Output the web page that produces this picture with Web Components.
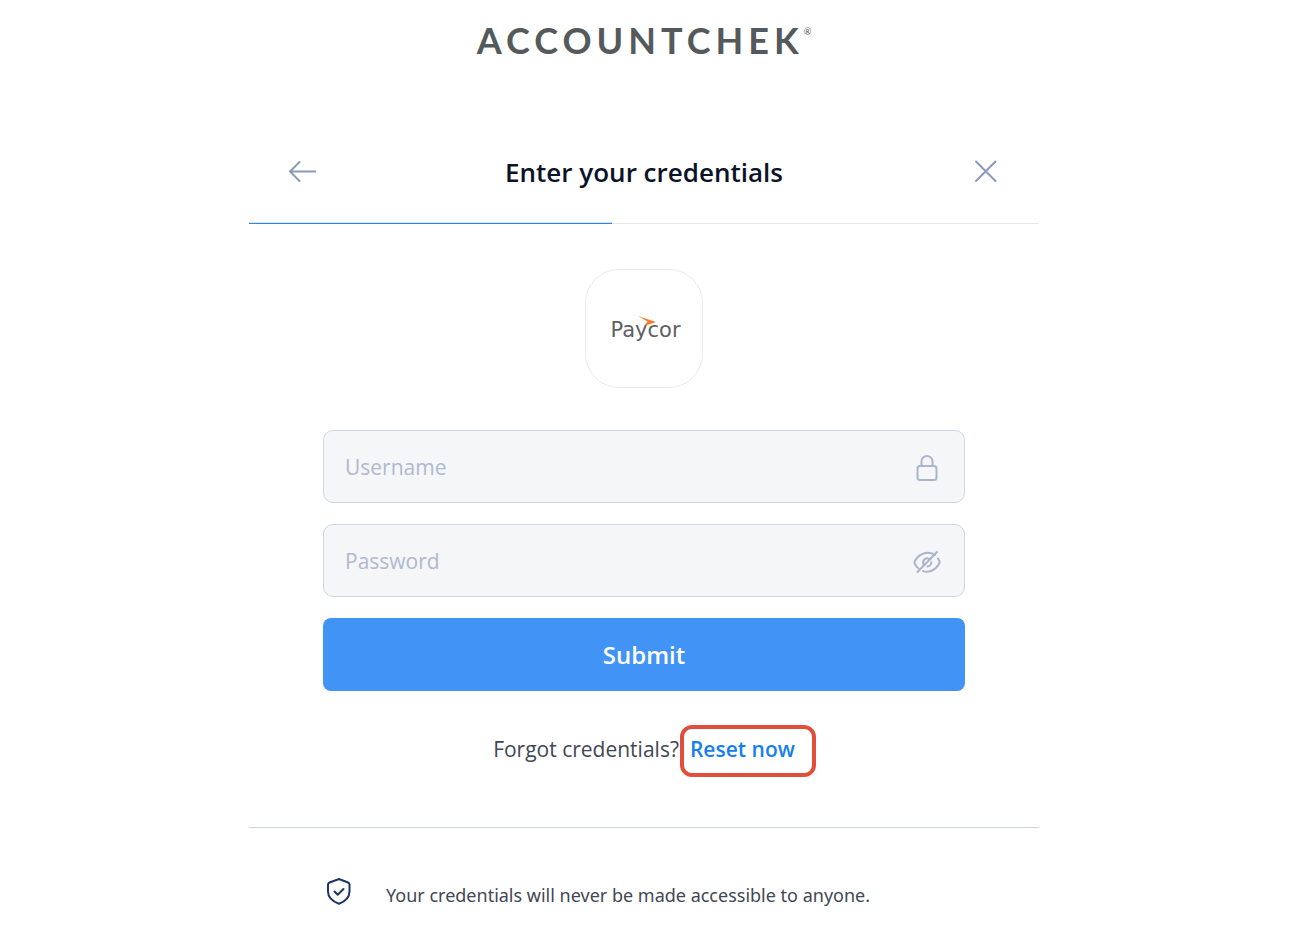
<!DOCTYPE html>
<html lang="en">
<head>
<meta charset="utf-8">
<meta name="viewport" content="width=device-width, initial-scale=1">
<title>AccountChek - Enter your credentials</title>
<style>
  body { margin: 0; padding-right: 3px; background: #fff; color: #3b414d; font-family: "Open Sans", "Noto Sans", sans-serif; }
</style>
</head>
<body>
<credentials-page></credentials-page>

<script>
const define = (name, html, setup) => {
  const template = document.createElement('template');
  template.innerHTML = `<style>*{box-sizing:border-box}svg{display:block;fill:none;stroke:currentColor;stroke-linecap:round;stroke-linejoin:round}</style>${html}`;
  customElements.define(name, class extends HTMLElement {
    connectedCallback() {
      if (this.shadowRoot) return;
      this.attachShadow({ mode: 'open' }).append(template.content.cloneNode(true));
      if (setup) setup(this, this.shadowRoot);
    }
  });
};

define('brand-wordmark', `
  <style>
    :host { display: flex; justify-content: center; align-items: flex-start; color: #54595c; font-family: Lato, sans-serif; }
    span { font-size: 36px; line-height: 44px; font-weight: 700; letter-spacing: 5px; }
    small { font-size: 9px; line-height: 12px; padding-top: 8px; }
  </style>
  <span><slot></slot></span><small>®</small>`);

define('step-header', `
  <style>
    :host { display: block; }
    header { display: grid; grid-template-columns: 28px 1fr 28px; align-items: center; padding: 0 39px; height: 102px; }
    h1 { margin: 0; text-align: center; font-size: 26px; line-height: 36px; font-weight: 600; color: #0b1328; }
    button { width: 28px; height: 28px; padding: 0; border: 0; background: none; color: #8b99ba; cursor: pointer; }
    .track { height: 1px; background: #e6e7ea; }
    .value { width: 46%; height: 1px; background: #3584e0; box-shadow: 0 -1px #d3e4f8; }
  </style>
  <header>
    <button type="button" aria-label="Back"><svg width="28" height="28" viewBox="0 0 28 28" stroke-width="2"><path d="M27.500 13.500H2M11.500 4 2 13.500l9.500 9.500"/></svg></button>
    <h1><slot></slot></h1>
    <button type="button" aria-label="Close"><svg width="28" height="28" viewBox="0 0 28 28" stroke-width="2"><path d="m4 3.500 19.500 19.500M23.500 3.500 4 23"/></svg></button>
  </header>
  <div class="track" role="progressbar" aria-label="Progress" aria-valuenow="46"><div class="value"></div></div>`);

define('provider-logo', `
  <style>
    :host { display: grid; place-items: center; position: relative; box-sizing: border-box; width: 118px; height: 119px; border: 1px solid #e8eaf0; border-radius: 34px; }
    span { font-family: "DejaVu Sans", sans-serif; font-size: 21px; line-height: 28px; color: #5f6063; padding: 2px 0 0 3px; }
    svg { position: absolute; left: 52px; top: 46px; }
  </style>
  <span><slot></slot></span>
  <svg width="18" height="11" viewBox="0 0 18 11" aria-hidden="true"><path d="M0 0 18 6 6 10 9.500 5.500Z" fill="#f47b2c" stroke="none"/></svg>`);

const fieldIcons = {
  lock: '<rect x="4.500" y="13" width="19" height="14" rx="2.500"/><path d="M8.500 13V8.500a5.500 5.500 0 0 1 11 0V13"/>',
  hidden: '<path d="M5.300 21.200C3.900 20.100 2.800 18.700 2 17.200c-.7-1.200-.7-2.200 0-3.400C6.800 5.700 15.500 3.600 22 8M25 11.500l1 1.800c.8 1.300.8 2.400 0 3.600-4 6.700-10.300 9.200-16 7.200M10.500 17.500c-1.800-4.600 3.200-8.200 6.800-5M18.300 15.200c.1 2.200-1.600 4-3.900 4.200M4.500 25 24 5"/>'
};

define('credential-field', `
  <style>
    :host { display: block; }
    label { display: flex; align-items: center; height: 73px; padding: 0 23px 0 21px; border: 1px solid #cfd3e2; border-radius: 10px; background: #f4f6f8; color: #abb4ca; }
    input { flex: 1; min-width: 0; padding: 0; border: 0; outline: 0; background: none; color: #0b1328; font: 400 21px/28px "Open Sans", "Noto Sans", sans-serif; }
    input::placeholder { color: #b0b9cf; opacity: 1; }
  </style>
  <label><input><svg width="28" height="28" viewBox="0 0 28 28" stroke-width="2" aria-hidden="true"></svg></label>`,
  (host, root) => {
    const input = root.querySelector('input');
    input.type = host.getAttribute('type');
    input.placeholder = host.getAttribute('label');
    input.setAttribute('aria-label', input.placeholder);
    root.querySelector('svg').innerHTML = fieldIcons[host.getAttribute('icon')];
  });

define('submit-button', `
  <style>
    :host { display: block; }
    button { display: block; width: 100%; height: 73px; border: 0; border-radius: 8px; background: #4193f5; color: #fff; font: 600 24px/32px "Open Sans", "Noto Sans", sans-serif; cursor: pointer; }
  </style>
  <button type="button"><slot></slot></button>`);

define('reset-prompt', `
  <style>
    :host { display: block; text-align: center; font-size: 21px; line-height: 28px; color: #414754; }
    p { display: flex; justify-content: center; gap: 11px; margin: 0; }
    a { position: relative; color: #157ef0; font-weight: 600; text-decoration: none; }
    a::after { content: ""; position: absolute; inset: -10px -21px -14px -10px; border: 4px solid #e24e3b; border-radius: 12px; }
  </style>
  <p><span><slot></slot></span><a href="#reset">Reset now</a></p>`);

define('security-note', `
  <style>
    :host { display: flex; align-items: flex-start; gap: 33px; padding: 49px 76px 14px; border-top: 1px solid #cdd3d9; color: #414754; }
    svg { flex: none; color: #1d3468; }
    p { margin: 0; padding-top: 4px; font: 400 18px/28px "Noto Sans", "Open Sans", sans-serif; }
  </style>
  <svg width="28" height="28" viewBox="0 0 28 28" stroke-width="2" aria-hidden="true"><path d="M12.800 2.500 14 2l1.200.5 7.800 3q1.500.6 1.500 2v7c0 7-4.500 10-10.500 12.300C8 24.500 3 21.500 3 14.500v-7q0-1.400 1.500-2ZM9.500 14.500l3.200 3.200 5.800-5.700"/></svg>
  <p><slot></slot></p>`);

define('credentials-page', `
  <style>
    :host { display: block; padding-top: 18px; }
    main { max-width: 790px; margin: 59px auto 0; }
    form { display: flex; flex-direction: column; gap: 21px; padding: 45px 74px 64px; }
    provider-logo { align-self: center; margin-bottom: 21px; }
    reset-prompt { padding-top: 23px; }
  </style>
  <brand-wordmark>ACCOUNTCHEK</brand-wordmark>
  <main>
    <step-header>Enter your credentials</step-header>
    <form>
      <provider-logo>Paycor</provider-logo>
      <credential-field type="text" label="Username" icon="lock"></credential-field>
      <credential-field type="password" label="Password" icon="hidden"></credential-field>
      <submit-button>Submit</submit-button>
      <reset-prompt>Forgot credentials?</reset-prompt>
    </form>
    <security-note>Your credentials will never be made accessible to anyone.</security-note>
  </main>`);
</script>
</body>
</html>
